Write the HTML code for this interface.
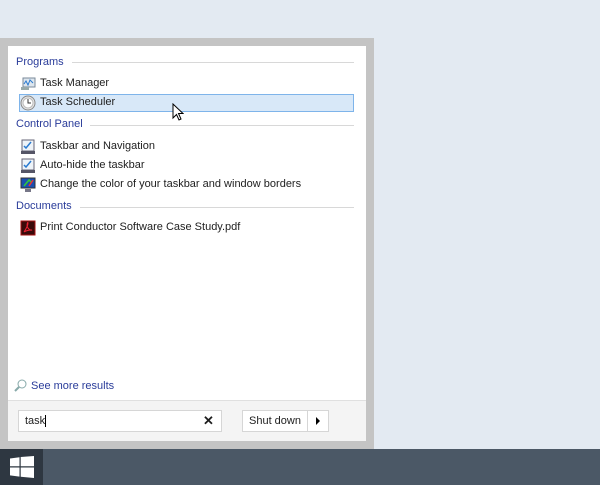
<!DOCTYPE html>
<html><head><style>
*{margin:0;padding:0;box-sizing:border-box}
body{width:600px;height:485px;background:#e3eaf2;position:relative;overflow:hidden;font-family:"Liberation Sans",sans-serif;font-size:11px;color:#1e1e1e}
.frame{position:absolute;left:0;top:38px;width:374px;height:411px;background:#c4c4c4}
.white{position:absolute;left:8px;top:46px;width:358px;height:354px;background:#fff}
.bottom{position:absolute;left:8px;top:400px;width:358px;height:41px;background:#f4f4f4;border-top:1px solid #e0e0e0}
.hdr{position:absolute;left:16px;color:#2a3c9a;font-size:11px}
.line{position:absolute;height:1px;background:#d8d8d8}
.item{position:absolute;left:40px;font-size:11px}
.ic{position:absolute;left:20px;width:16px;height:16px}
.taskbar{position:absolute;left:0;top:449px;width:600px;height:36px;background:#4b5866}
.start{position:absolute;left:0;top:449px;width:43px;height:36px;background:#2e3741}
</style></head><body>
<div class="frame"></div>
<div class="white"></div>
<div class="bottom"></div>

<div class="hdr" style="top:56px">Programs</div><div class="line" style="left:72px;top:62px;width:282px"></div>
<svg class="ic" style="top:76px" viewBox="0 0 16 16"><rect x="3" y="2" width="12" height="9" fill="#dde6ee" stroke="#7a8a99"/><polyline points="4,8 6,5 8,9 10,4 13,7" fill="none" stroke="#2a7ad0"/><rect x="1" y="11" width="8" height="3" fill="#9aa"/></svg>
<div class="item" style="top:77px">Task Manager</div>
<div style="position:absolute;left:19px;top:94px;width:335px;height:18px;background:#d8e8f8;border:1px solid #7eb4ea"></div>
<svg class="ic" style="top:95px" viewBox="0 0 16 16"><circle cx="8" cy="8" r="7" fill="#e8e8e8" stroke="#888"/><circle cx="8" cy="8" r="5" fill="#fff" stroke="#bbb"/><path d="M8 4V8H11" stroke="#333" fill="none"/></svg>
<div class="item" style="top:96px">Task Scheduler</div>

<div class="hdr" style="top:118px">Control Panel</div><div class="line" style="left:90px;top:125px;width:264px"></div>
<svg class="ic" style="top:139px" viewBox="0 0 16 16"><rect x="2" y="1" width="12" height="11" fill="#eef3f8" stroke="#667"/><path d="M4 7l2 2 5-6" stroke="#2a7ad0" stroke-width="1.5" fill="none"/><rect x="1" y="12" width="14" height="3" fill="#556"/></svg>
<div class="item" style="top:140px">Taskbar and Navigation</div>
<svg class="ic" style="top:158px" viewBox="0 0 16 16"><rect x="2" y="1" width="12" height="11" fill="#eef3f8" stroke="#667"/><path d="M4 7l2 2 5-6" stroke="#2a7ad0" stroke-width="1.5" fill="none"/><rect x="1" y="12" width="14" height="3" fill="#556"/></svg>
<div class="item" style="top:159px">Auto-hide the taskbar</div>
<svg class="ic" style="top:177px" viewBox="0 0 16 16"><rect x="1" y="1" width="14" height="10" fill="#1a4fb0" stroke="#333"/><path d="M4 9l5-6 2 2" stroke="#3c3" stroke-width="1.5" fill="none"/><path d="M9 9l4-6" stroke="#e33" stroke-width="1.5"/><rect x="5" y="12" width="6" height="3" fill="#778"/></svg>
<div class="item" style="top:178px">Change the color of your taskbar and window borders</div>

<div class="hdr" style="top:200px">Documents</div><div class="line" style="left:80px;top:207px;width:274px"></div>
<svg class="ic" style="top:220px" viewBox="0 0 16 16"><rect x="1" y="1" width="14" height="14" fill="#3a0a0a" stroke="#a11"/><path d="M4 12c2-3 4-7 4-9s-2 2 0 5 4 2 4 2-5 0-8 2" stroke="#e23" fill="none"/></svg>
<div class="item" style="top:221px">Print Conductor Software Case Study.pdf</div>

<svg style="position:absolute;left:14px;top:379px" width="14" height="14" viewBox="0 0 14 14"><circle cx="8" cy="5" r="4" fill="none" stroke="#8aa"/><path d="M5 8L1 12" stroke="#8aa" stroke-width="2"/></svg>
<div style="position:absolute;left:31px;top:380px;color:#2a3c9a">See more results</div>

<div style="position:absolute;left:18px;top:410px;width:204px;height:22px;background:#fff;border:1px solid #d6d6d6"></div>
<div style="position:absolute;left:25px;top:415px">task<span style="border-left:1px solid #000"> </span></div>
<div style="position:absolute;left:203px;top:413px;font-weight:bold;font-size:13px">✕</div>
<div style="position:absolute;left:242px;top:410px;width:87px;height:22px;background:#fff;border:1px solid #d6d6d6"></div>
<div style="position:absolute;left:307px;top:411px;width:1px;height:20px;background:#d6d6d6"></div>
<div style="position:absolute;left:249px;top:415px">Shut down</div>
<div style="position:absolute;left:316px;top:417px;width:0;height:0;border-left:4px solid #000;border-top:4px solid transparent;border-bottom:4px solid transparent"></div>

<svg style="position:absolute;left:172px;top:103px" width="12" height="18" viewBox="0 0 12 18"><path d="M1 1V15L4.5 11.5L7 17L9 16L6.5 10.5H11Z" fill="#fff" stroke="#000"/></svg>

<div class="taskbar"></div>
<div class="start"></div>
<svg style="position:absolute;left:10px;top:456px" width="24" height="22" viewBox="0 0 24 22"><path d="M0 2.5L9.5 1.2V10.3H0Z M10.7 1L24 0V10.3H10.7Z M0 11.5H9.5V20.6L0 19.4Z M10.7 11.5H24V22L10.7 20.8Z" fill="#fff"/></svg>
</body></html>
